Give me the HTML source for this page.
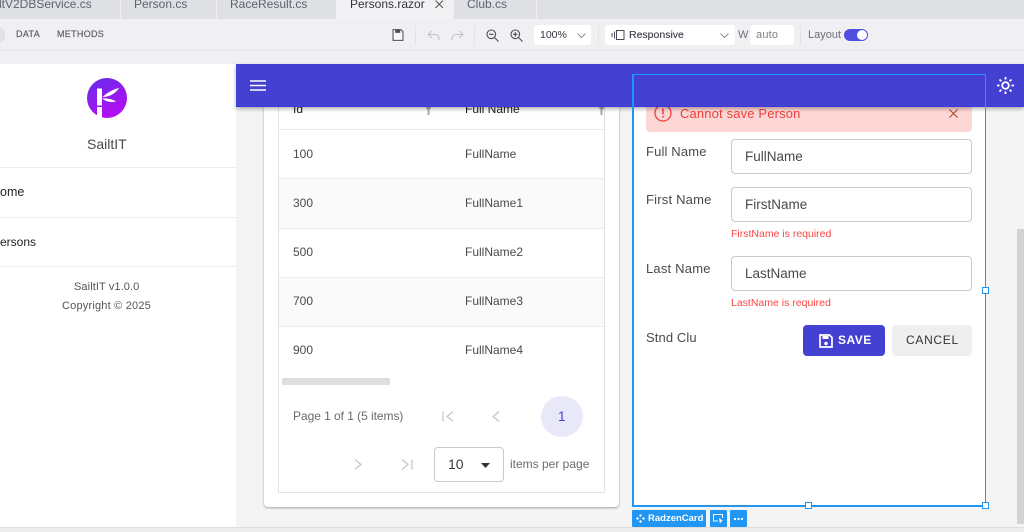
<!DOCTYPE html>
<html><head><meta charset="utf-8"><style>
html,body{margin:0;padding:0;width:1024px;height:532px;overflow:hidden;background:#f0f0f2;font-family:"Liberation Sans",sans-serif}
.a{position:absolute;box-sizing:border-box}
.t{position:absolute;white-space:nowrap;line-height:1}
svg{position:absolute;overflow:visible}
.inp{position:absolute;left:731px;width:241px;height:35px;background:#fff;border:1px solid #cbcbcb;border-radius:4px;box-sizing:border-box}
</style></head><body>
<!-- tabs -->
<div class="a" style="left:0;top:0;width:1024px;height:19px;background:#dfe0e4"></div>
<div class="a" style="left:120px;top:0;width:1px;height:19px;background:#f0f0f2"></div>
<div class="a" style="left:216px;top:0;width:1px;height:19px;background:#f0f0f2"></div>
<div class="a" style="left:336px;top:0;width:118px;height:19px;background:#f2f2f4"></div>
<div class="a" style="left:536px;top:0;width:1px;height:19px;background:#eeeef0"></div>
<div class="t" style="left:-1px;top:-2px;font-size:12px;color:#5f6270">ltV2DBService.cs</div>
<div class="t" style="left:134px;top:-2px;font-size:12px;color:#5f6270">Person.cs</div>
<div class="t" style="left:230px;top:-2px;font-size:12px;color:#5f6270">RaceResult.cs</div>
<div class="t" style="left:350px;top:-2px;font-size:12px;color:#33353f">Persons.razor</div>
<svg style="left:435px;top:0" width="9" height="9"><path d="M.5.5l7.500 7.500M8 .5l-7.500 7.500" stroke="#555" stroke-width="1" fill="none"/></svg>
<div class="t" style="left:467px;top:-2px;font-size:12px;color:#5f6270">Club.cs</div>
<!-- toolbar -->
<div class="a" style="left:0;top:19px;width:1024px;height:32px;background:#f0f0f2;border-bottom:1px solid #e6e6e8"></div>
<div class="a" style="left:-8px;top:27px;width:13px;height:16px;border-radius:8px;background:#e2e2e5"></div>
<div class="t" style="left:16px;top:30px;font-size:9px;color:#5f6270;letter-spacing:.35px;-webkit-text-stroke:.2px #5f6270">DATA</div>
<div class="t" style="left:57px;top:30px;font-size:9px;color:#5f6270;letter-spacing:.3px;-webkit-text-stroke:.2px #5f6270">METHODS</div>
<svg style="left:392px;top:29px" width="12" height="12" viewBox="0 0 13 14"><path d="M.7.7h9.300l2.300 2.300v10.300h-11.600z" fill="#f8f8f8" stroke="#4a4d59" stroke-width="1.200"/><rect x="3.200" y="1" width="6" height="3.500" fill="#4a4d59"/></svg>
<div class="a" style="left:415px;top:25px;width:1px;height:20px;background:#e4e4e6"></div>
<svg style="left:427px;top:30px" width="13" height="11" viewBox="0 0 13 11"><path d="M5 1L1 4.500L5 8M1 4.500h7.500c2.500 0 3.500 2 3.500 5.500" fill="none" stroke="#c3c4c9" stroke-width="1.100"/></svg>
<svg style="left:451px;top:30px" width="13" height="11" viewBox="0 0 13 11"><path d="M8 1l4 3.500L8 8M12 4.500H4.500C2 4.500 1 6.500 1 10" fill="none" stroke="#c3c4c9" stroke-width="1.100"/></svg>
<div class="a" style="left:474px;top:25px;width:1px;height:20px;background:#e4e4e6"></div>
<svg style="left:486px;top:29px" width="13" height="13" viewBox="0 0 13 13"><circle cx="5.300" cy="5.300" r="4.300" fill="none" stroke="#4a4d59" stroke-width="1.100"/><path d="M8.500 8.500l4 4M3 5.300h4.600" stroke="#4a4d59" stroke-width="1.100"/></svg>
<svg style="left:510px;top:29px" width="13" height="13" viewBox="0 0 13 13"><circle cx="5.300" cy="5.300" r="4.300" fill="none" stroke="#4a4d59" stroke-width="1.100"/><path d="M8.500 8.500l4 4M3 5.300h4.600M5.300 3v4.600" stroke="#4a4d59" stroke-width="1.100"/></svg>
<div class="a" style="left:534px;top:25px;width:57px;height:20px;background:#fff;border-radius:3px"></div>
<div class="t" style="left:540px;top:30px;font-size:10.500px;color:#33353f">100%</div>
<svg style="left:577px;top:33px" width="9" height="5"><path d="M.5.500L4.500 4.500L8.500.500" fill="none" stroke="#8b8d96"/></svg>
<div class="a" style="left:598px;top:25px;width:1px;height:20px;background:#e4e4e6"></div>
<div class="a" style="left:605px;top:25px;width:130px;height:20px;background:#fff;border-radius:3px"></div>
<svg style="left:611px;top:30px" width="14" height="10" viewBox="0 0 14 10"><rect x="5.500" y=".5" width="7.500" height="9" fill="none" stroke="#4a4d59"/><path d="M3.500 1.500v7M1 3v4" stroke="#4a4d59"/></svg>
<div class="t" style="left:629px;top:30px;font-size:10.500px;color:#33353f;-webkit-text-stroke:.1px #33353f">Responsive</div>
<svg style="left:720px;top:33px" width="9" height="5"><path d="M.5.500L4.500 4.500L8.500.500" fill="none" stroke="#8b8d96"/></svg>
<div class="t" style="left:738px;top:30px;font-size:11px;color:#6c6e78">W</div>
<div class="a" style="left:750px;top:25px;width:44px;height:20px;background:#fff;border-radius:3px"></div>
<div class="t" style="left:756px;top:30px;font-size:11px;color:#7d7f88;letter-spacing:.2px">auto</div>
<div class="a" style="left:800px;top:25px;width:1px;height:20px;background:#e4e4e6"></div>
<div class="t" style="left:808px;top:30px;font-size:11px;color:#6c6e78">Layout</div>
<div class="a" style="left:844px;top:29px;width:24px;height:12px;background:#4f4fe0;border-radius:6px"></div>
<div class="a" style="left:857px;top:30px;width:10px;height:10px;background:#fff;border-radius:50%"></div>
<!-- page -->
<div class="a" style="left:0;top:64px;width:1024px;height:463px;background:#f4f4f4"></div>
<div class="a" style="left:0;top:64px;width:236px;height:463px;background:#fff"></div>
<div class="a" style="left:1017px;top:229px;width:7px;height:295px;background:#d3d3d3"></div>
<!-- sidebar -->
<svg style="left:87px;top:78px" width="40" height="40" viewBox="0 0 40 40"><defs><linearGradient id="g" x1=".2" y1="0" x2=".7" y2="1"><stop offset="0" stop-color="#6a2be8"/><stop offset="1" stop-color="#b90cf5"/></linearGradient></defs><circle cx="20" cy="20" r="20" fill="url(#g)"/><path d="M10 10.500h5V27.500h-5zM10 29h5V39.500h-5z" fill="#fff"/><path d="M15.500 19C21 14 27 11 32 10C29 15 23 19 15.500 19ZM15 20.500C20 20 25 21 29 23.500C24 25 19 23.500 15 20.500Z" fill="#fff"/></svg>
<div class="t" style="left:87px;top:137px;font-size:14px;color:#4a4a4f">SailtIT</div>
<div class="a" style="left:0;top:167px;width:236px;height:1px;background:#eeeeee"></div>
<div class="t" style="left:0;top:186px;font-size:12.500px;color:#222">ome</div>
<div class="a" style="left:0;top:217px;width:236px;height:1px;background:#eeeeee"></div>
<div class="t" style="left:0;top:236px;font-size:12px;color:#222">ersons</div>
<div class="a" style="left:0;top:266px;width:236px;height:1px;background:#eeeeee"></div>
<div class="t" style="left:74px;top:282px;font-size:11px;color:#55555a;letter-spacing:.1px">SailtIT v1.0.0</div>
<div class="t" style="left:62px;top:301px;font-size:11px;color:#55555a;letter-spacing:.2px">Copyright © 2025</div>
<!-- left card -->
<div class="a" style="left:264px;top:90px;width:355px;height:417px;background:#fff;border-radius:4px;box-shadow:0 1px 2px rgba(0,0,0,.35)"></div>
<div class="a" style="left:278px;top:90px;width:327px;height:403px;border:1px solid #e2e2e2;border-top:0"></div>
<div class="t" style="left:293px;top:103px;font-size:12px;color:#222">Id</div>
<div class="t" style="left:465px;top:103px;font-size:12px;color:#222">Full Name</div>
<svg style="left:425px;top:106px" width="7" height="9"><path d="M0 0h7L4.500 4v5h-2V4z" fill="#aaa"/></svg>
<svg style="left:598px;top:106px" width="7" height="9"><path d="M0 0h7L4.500 4v5h-2V4z" fill="#aaa"/></svg>
<div class="a" style="left:279px;top:129px;width:325px;height:1px;background:#ececec"></div>
<div class="a" style="left:279px;top:179px;width:325px;height:49px;background:#fafafa"></div>
<div class="a" style="left:279px;top:178px;width:325px;height:1px;background:#ececec"></div>
<div class="a" style="left:279px;top:228px;width:325px;height:1px;background:#ececec"></div>
<div class="a" style="left:279px;top:277px;width:325px;height:1px;background:#ececec"></div>
<div class="a" style="left:279px;top:278px;width:325px;height:48px;background:#fafafa"></div>
<div class="a" style="left:279px;top:326px;width:325px;height:1px;background:#ececec"></div>
<div class="t" style="left:293px;top:148px;font-size:12px;color:#4a4a4a">100</div><div class="t" style="left:465px;top:148px;font-size:12px;color:#4a4a4a">FullName</div>
<div class="t" style="left:293px;top:197px;font-size:12px;color:#4a4a4a">300</div><div class="t" style="left:465px;top:197px;font-size:12px;color:#4a4a4a">FullName1</div>
<div class="t" style="left:293px;top:246px;font-size:12px;color:#4a4a4a">500</div><div class="t" style="left:465px;top:246px;font-size:12px;color:#4a4a4a">FullName2</div>
<div class="t" style="left:293px;top:295px;font-size:12px;color:#4a4a4a">700</div><div class="t" style="left:465px;top:295px;font-size:12px;color:#4a4a4a">FullName3</div>
<div class="t" style="left:293px;top:344px;font-size:12px;color:#4a4a4a">900</div><div class="t" style="left:465px;top:344px;font-size:12px;color:#4a4a4a">FullName4</div>
<div class="a" style="left:282px;top:378px;width:108px;height:7px;background:#dedede"></div>
<div class="t" style="left:293px;top:410px;font-size:12px;color:#6a6a6a;letter-spacing:-.05px">Page 1 of 1 (5 items)</div>
<svg style="left:442px;top:411px" width="12" height="11"><path d="M1 .5v10M11 .5L5 5.500l6 5" fill="none" stroke="#c4c4c4" stroke-width="1.200"/></svg>
<svg style="left:492px;top:411px" width="8" height="11"><path d="M7 .5L1 5.500l6 5" fill="none" stroke="#c4c4c4" stroke-width="1.200"/></svg>
<div class="a" style="left:541px;top:396px;width:42px;height:41px;background:#e9e8f9;border-radius:50%"></div>
<div class="t" style="left:558px;top:410px;font-size:13.500px;color:#4340d2">1</div>
<svg style="left:354px;top:459px" width="8" height="11"><path d="M1 .5L7 5.500l-6 5" fill="none" stroke="#c4c4c4" stroke-width="1.200"/></svg>
<svg style="left:401px;top:459px" width="12" height="11"><path d="M11 .5v10M1 .5L7 5.500l-6 5" fill="none" stroke="#c4c4c4" stroke-width="1.200"/></svg>
<div class="a" style="left:434px;top:447px;width:70px;height:35px;background:#fff;border:1px solid #c9c9c9;border-radius:4px"></div>
<div class="t" style="left:448px;top:457px;font-size:14px;color:#3a3a3a">10</div>
<svg style="left:481px;top:463px" width="9" height="5"><path d="M0 0h9L4.500 5z" fill="#333"/></svg>
<div class="t" style="left:510px;top:458px;font-size:12px;color:#6a6a6a">items per page</div>
<!-- right card -->
<div class="a" style="left:633px;top:90px;width:352px;height:416px;background:#fff"></div>
<div class="a" style="left:646px;top:95px;width:326px;height:37px;background:#fdd7d5;border-radius:4px"></div>
<svg style="left:654px;top:104px" width="18" height="18" viewBox="0 0 18 18"><circle cx="9" cy="9" r="8" fill="none" stroke="#ef3f3a" stroke-width="1.300"/><path d="M9 4.500v6M9 12v1.800" stroke="#ef3f3a" stroke-width="1.500"/></svg>
<div class="t" style="left:680px;top:107px;font-size:13px;color:#ef3f3a;letter-spacing:.15px">Cannot save Person</div>
<svg style="left:949px;top:109px" width="9" height="9"><path d="M.5.500l8 8M8.500.500l-8 8" stroke="#a8482f" stroke-width="1.100"/></svg>
<div class="t" style="left:646px;top:145px;font-size:13px;color:#4a4a4a;letter-spacing:.15px">Full Name</div>
<div class="inp" style="top:139px"></div>
<div class="t" style="left:745px;top:150px;font-size:13.500px;color:#4a4a4a">FullName</div>
<div class="t" style="left:646px;top:193px;font-size:13px;color:#4a4a4a;letter-spacing:.2px">First Name</div>
<div class="inp" style="top:187px"></div>
<div class="t" style="left:745px;top:198px;font-size:13.500px;color:#4a4a4a">FirstName</div>
<div class="t" style="left:731px;top:229px;font-size:10.500px;color:#f44">FirstName is required</div>
<div class="t" style="left:646px;top:262px;font-size:13px;color:#4a4a4a;letter-spacing:.2px">Last Name</div>
<div class="inp" style="top:256px"></div>
<div class="t" style="left:745px;top:267px;font-size:13.500px;color:#4a4a4a">LastName</div>
<div class="t" style="left:731px;top:298px;font-size:10.500px;color:#f44">LastName is required</div>
<div class="t" style="left:646px;top:331px;font-size:13px;color:#4a4a4a;letter-spacing:.1px">Stnd Clu</div>
<div class="a" style="left:803px;top:325px;width:82px;height:31px;background:#4340d2;border-radius:4px"></div>
<svg style="left:819px;top:334px" width="14" height="14" viewBox="0 0 14 14"><path d="M1 1h9.500L13 3.500V13H1z" fill="none" stroke="#fff" stroke-width="1.700"/><rect x="3.500" y="2" width="6" height="3" fill="#fff"/><circle cx="7" cy="9.500" r="1.700" fill="#fff"/></svg>
<div class="t" style="left:838px;top:334px;font-size:12px;font-weight:bold;color:#fff;letter-spacing:.5px">SAVE</div>
<div class="a" style="left:892px;top:325px;width:80px;height:31px;background:#efefef;border-radius:4px"></div>
<div class="t" style="left:906px;top:334px;font-size:12px;color:#333;letter-spacing:.7px">CANCEL</div>
<!-- header -->
<div class="a" style="left:236px;top:64px;width:788px;height:43px;background:#4340d2;border-bottom:1px solid #3a36e0;box-shadow:0 2px 4px rgba(0,0,0,.3)"></div>
<svg style="left:250px;top:80px" width="16" height="11"><path d="M0 1h16M0 5.500h16M0 10h16" stroke="#fff" stroke-width="1.500"/></svg>
<svg style="left:997px;top:77px" width="17" height="17" viewBox="0 0 17 17"><circle cx="8.500" cy="8.500" r="3.300" fill="none" stroke="#fff" stroke-width="1.800"/><path d="M8.500 0v2.500M8.500 14.500V17M0 8.500h2.500M14.500 8.500H17M2.500 2.500l1.800 1.800M12.700 12.700l1.800 1.800M14.500 2.500l-1.800 1.800M4.300 12.700l-1.800 1.800" stroke="#fff" stroke-width="1.800"/></svg>
<!-- selection -->
<div class="a" style="left:632px;top:74px;width:354px;height:433px;border:1px solid #2196f3;border-left-width:2px;border-bottom-width:2px"></div>
<div class="a" style="left:982px;top:287px;width:7px;height:7px;background:#fff;border:1px solid #2196f3"></div>
<div class="a" style="left:805px;top:502px;width:7px;height:7px;background:#fff;border:1px solid #2196f3"></div>
<div class="a" style="left:982px;top:502px;width:7px;height:7px;background:#fff;border:1px solid #2196f3"></div>
<div class="a" style="left:632px;top:510px;width:74px;height:17px;background:#2196f3;border-radius:1px"></div>
<svg style="left:636px;top:514px" width="9" height="9"><path d="M4.500 0L6 1.500 4.500 3 3 1.500zM4.500 6L6 7.500 4.500 9 3 7.500zM1.500 3L3 4.500 1.500 6 0 4.500zM7.500 3L9 4.500 7.500 6 6 4.500z" fill="#fff"/></svg>
<div class="t" style="left:648px;top:514px;font-size:9.500px;font-weight:bold;color:#fff">RadzenCard</div>
<div class="a" style="left:710px;top:510px;width:17px;height:17px;background:#2196f3;border-radius:1px"></div>
<svg style="left:713px;top:514px" width="11" height="10"><path d="M5 7H.5V.5h9V4" fill="none" stroke="#fff"/><path d="M6 4l4 3-2 .5L7 10z" fill="#fff"/></svg>
<div class="a" style="left:730px;top:510px;width:17px;height:17px;background:#2196f3;border-radius:1px"></div>
<svg style="left:734px;top:518px" width="9" height="2"><path d="M0 0h2v2H0zM3.500 0h2v2h-2zM7 0h2v2H7z" fill="#fff"/></svg>
<!-- bottom -->
<div class="a" style="left:0;top:527px;width:1024px;height:5px;background:#ececec;border-top:1px solid #dedede"></div>
</body></html>
